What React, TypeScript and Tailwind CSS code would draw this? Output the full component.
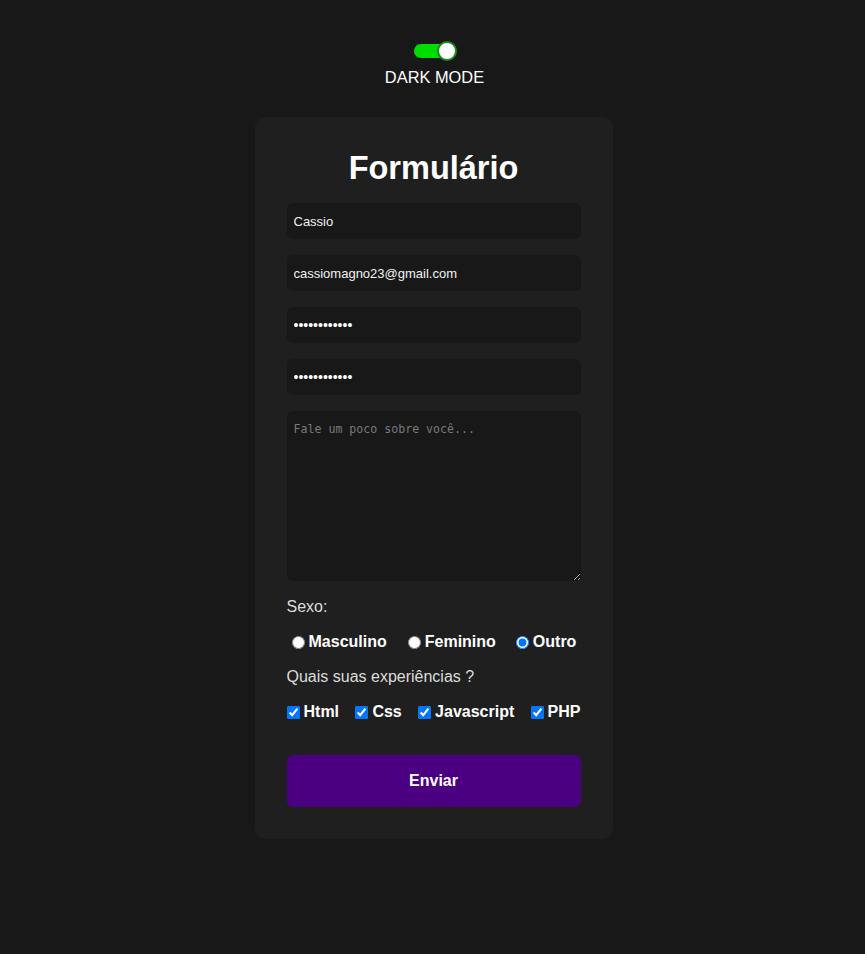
export default function App() {
  return (
    <main className="min-h-screen bg-[#181818] text-white flex flex-col items-center pt-[41px] pl-[2px] font-['Liberation_Sans',Arial,sans-serif]">
      <div className="flex flex-col items-center">
        <div className="relative ml-[5px] w-[43px] h-[20px] flex items-center">
          <div className="w-[41px] h-[14px] rounded-full bg-[#00dd00]" />
          <div className="absolute right-0 top-0 w-[20px] h-[20px] rounded-full bg-white border-2 border-[#1c8a1c]" />
        </div>
        <span className="mt-[7px] ml-[2px] text-[16.4px] leading-[18px]">DARK MODE</span>
      </div>

      <form className="mt-[31px] w-[358px] bg-[#1f1f1f] rounded-[10px] px-8 pt-[32px] pb-[32px] flex flex-col gap-4">
        <h1 className="text-center text-[32.5px] leading-[38px] font-bold">Formulário</h1>
        <input
          type="text"
          defaultValue="Cassio"
          className="h-9 bg-[#181818] rounded-[6px] px-[7px] text-[13px] text-[#f2f2f2] outline-none"
        />
        <input
          type="email"
          defaultValue="cassiomagno23@gmail.com"
          className="h-9 bg-[#181818] rounded-[6px] px-[7px] text-[13px] text-[#f2f2f2] outline-none"
        />
        <input
          type="password"
          defaultValue="cassio123456"
          className="h-9 bg-[#181818] rounded-[6px] px-[7px] text-[14px] text-white outline-none"
        />
        <input
          type="password"
          defaultValue="cassio123456"
          className="h-9 bg-[#181818] rounded-[6px] px-[7px] text-[14px] text-white outline-none"
        />
        <textarea
          placeholder="Fale um poco sobre você..."
          className="h-[170px] bg-[#181818] rounded-[6px] px-[7px] py-[11px] text-[11.6px] leading-[14px] font-['DejaVu_Sans_Mono',monospace] text-white placeholder:text-[#7a7a7a] outline-none"
        />
        <span className="mt-[1px] text-[16px] leading-[18px] text-[#dcdcdc]">Sexo:</span>
        <div className="flex items-center gap-[20px] h-5">
          <label className="flex items-center font-bold text-[16px]">
            <input type="radio" name="sexo" className="ml-[5px] mr-[4px] w-[13px] h-[13px]" />
            Masculino
          </label>
          <label className="flex items-center font-bold text-[16px]">
            <input type="radio" name="sexo" className="ml-[1px] mr-[4px] w-[13px] h-[13px]" />
            Feminino
          </label>
          <label className="flex items-center font-bold text-[16px]">
            <input type="radio" name="sexo" defaultChecked className="mr-[4px] w-[13px] h-[13px]" />
            Outro
          </label>
        </div>
        <span className="text-[16px] leading-[18px] text-[#dcdcdc]">Quais suas experiências ?</span>
        <div className="flex items-center justify-between h-5">
          <label className="flex items-center font-bold text-[16px]">
            <input type="checkbox" defaultChecked className="mr-[4px] w-[13px] h-[13px]" />
            Html
          </label>
          <label className="flex items-center font-bold text-[16px]">
            <input type="checkbox" defaultChecked className="mr-[4px] w-[13px] h-[13px]" />
            Css
          </label>
          <label className="flex items-center font-bold text-[16px]">
            <input type="checkbox" defaultChecked className="mr-[4px] w-[13px] h-[13px]" />
            Javascript
          </label>
          <label className="flex items-center font-bold text-[16px]">
            <input type="checkbox" defaultChecked className="mr-[4px] w-[13px] h-[13px]" />
            PHP
          </label>
        </div>
        <button
          type="button"
          className="mt-[17px] h-[52px] bg-[#4b0082] rounded-[6px] text-[16px] font-bold text-white"
        >
          Enviar
        </button>
      </form>
    </main>
  );
}
